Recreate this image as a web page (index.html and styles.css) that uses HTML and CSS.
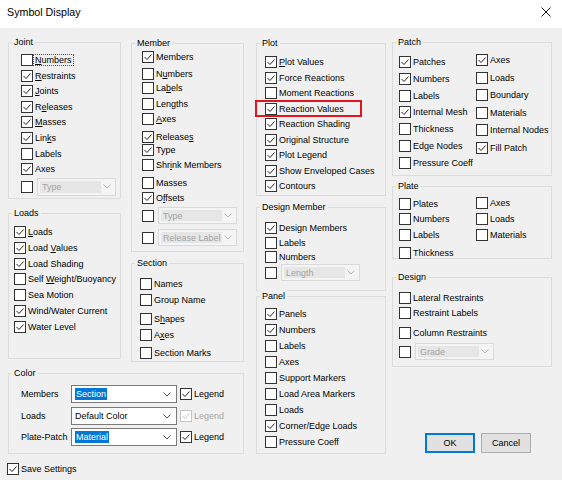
FILE: index.html
```html
<!DOCTYPE html>
<html>
<head>
<meta charset="utf-8">
<title>Symbol Display</title>
<link rel="stylesheet" href="styles.css">
</head>
<body>
<div class="dialog">
  <div class="titlebar">
    <span class="title">Symbol Display</span>
    <svg class="close" viewBox="0 0 10 10"><path d="M0.5 0.5 L9.5 9.5 M9.5 0.5 L0.5 9.5"/></svg>
  </div>
  <div class="main">
    <div class="left">
      <div class="cols-ab">
        <div class="col col-a">
          <div class="group joint">
            <span class="legend">Joint</span>
            <div class="row"><span class="cb"></span><span class="focus"><u>N</u>umbers</span></div>
            <div class="row"><span class="cb on"><svg viewBox="0 0 10 10"><polyline points="1.5,5 4,7.5 8.5,2.5"/></svg></span><span><u>R</u>estraints</span></div>
            <div class="row"><span class="cb on"><svg viewBox="0 0 10 10"><polyline points="1.5,5 4,7.5 8.5,2.5"/></svg></span><span><u>J</u>oints</span></div>
            <div class="row"><span class="cb on"><svg viewBox="0 0 10 10"><polyline points="1.5,5 4,7.5 8.5,2.5"/></svg></span><span>R<u>e</u>leases</span></div>
            <div class="row"><span class="cb on"><svg viewBox="0 0 10 10"><polyline points="1.5,5 4,7.5 8.5,2.5"/></svg></span><span><u>M</u>asses</span></div>
            <div class="row"><span class="cb on"><svg viewBox="0 0 10 10"><polyline points="1.5,5 4,7.5 8.5,2.5"/></svg></span><span>Lin<u>k</u>s</span></div>
            <div class="row"><span class="cb"></span><span>Labels</span></div>
            <div class="row"><span class="cb on"><svg viewBox="0 0 10 10"><polyline points="1.5,5 4,7.5 8.5,2.5"/></svg></span><span>Axes</span></div>
            <div class="row crow crow18 mt1"><span class="cb"></span><div class="combo dis"><span class="ctext">Type</span><svg class="chev" viewBox="0 0 8 5"><polyline points="0.5,0.5 4,4 7.5,0.5"/></svg></div></div>
          </div>
          <div class="group loads">
            <span class="legend">Loads</span>
            <div class="row"><span class="cb on"><svg viewBox="0 0 10 10"><polyline points="1.5,5 4,7.5 8.5,2.5"/></svg></span><span><u>L</u>oads</span></div>
            <div class="row"><span class="cb on"><svg viewBox="0 0 10 10"><polyline points="1.5,5 4,7.5 8.5,2.5"/></svg></span><span>Load <u>V</u>alues</span></div>
            <div class="row"><span class="cb on"><svg viewBox="0 0 10 10"><polyline points="1.5,5 4,7.5 8.5,2.5"/></svg></span><span>Load Shading</span></div>
            <div class="row"><span class="cb"></span><span>Self <u>W</u>eight/Buoyancy</span></div>
            <div class="row"><span class="cb"></span><span>Sea Motion</span></div>
            <div class="row"><span class="cb on"><svg viewBox="0 0 10 10"><polyline points="1.5,5 4,7.5 8.5,2.5"/></svg></span><span>Wind/Water Current</span></div>
            <div class="row"><span class="cb on"><svg viewBox="0 0 10 10"><polyline points="1.5,5 4,7.5 8.5,2.5"/></svg></span><span>Water Level</span></div>
          </div>
        </div>
        <div class="col col-b">
          <div class="group member">
            <span class="legend">Member</span>
            <div class="row"><span class="cb on"><svg viewBox="0 0 10 10"><polyline points="1.5,5 4,7.5 8.5,2.5"/></svg></span><span>Members</span></div>
            <div class="row mt1"><span class="cb"></span><span>N<u>u</u>mbers</span></div>
            <div class="row mt-2"><span class="cb"></span><span>La<u>b</u>els</span></div>
            <div class="row"><span class="cb"></span><span>Len<u>g</u>ths</span></div>
            <div class="row mt-1"><span class="cb"></span><span><u>A</u>xes</span></div>
            <div class="row mt2"><span class="cb on"><svg viewBox="0 0 10 10"><polyline points="1.5,5 4,7.5 8.5,2.5"/></svg></span><span>Release<u>s</u></span></div>
            <div class="row mt-3"><span class="cb on"><svg viewBox="0 0 10 10"><polyline points="1.5,5 4,7.5 8.5,2.5"/></svg></span><span>Type</span></div>
            <div class="row mt-1"><span class="cb"></span><span>Shr<u>i</u>nk Members</span></div>
            <div class="row mt2"><span class="cb"></span><span>Masses</span></div>
            <div class="row mt-1"><span class="cb on"><svg viewBox="0 0 10 10"><polyline points="1.5,5 4,7.5 8.5,2.5"/></svg></span><span>O<u>f</u>fsets</span></div>
            <div class="row crow mt1"><span class="cb"></span><div class="combo dis"><span class="ctext">Type</span><svg class="chev" viewBox="0 0 8 5"><polyline points="0.5,0.5 4,4 7.5,0.5"/></svg></div></div>
            <div class="row crow mt5"><span class="cb"></span><div class="combo dis"><span class="ctext">Release Label</span><svg class="chev" viewBox="0 0 8 5"><polyline points="0.5,0.5 4,4 7.5,0.5"/></svg></div></div>
          </div>
          <div class="group section">
            <span class="legend">Section</span>
            <div class="row"><span class="cb"></span><span>Names</span></div>
            <div class="row"><span class="cb"></span><span>Group Name</span></div>
            <div class="row mt3"><span class="cb"></span><span>S<u>h</u>apes</span></div>
            <div class="row"><span class="cb"></span><span>A<u>x</u>es</span></div>
            <div class="row mt2"><span class="cb"></span><span>Section Marks</span></div>
          </div>
        </div>
      </div>
      <div class="group color">
        <span class="legend">Color</span>
        <div class="crow-color">
          <span class="clabel">Members</span>
          <div class="combo en"><span class="ctext"><span class="sel">Section</span></span><svg class="chev" viewBox="0 0 8 5"><polyline points="0.5,0.5 4,4 7.5,0.5"/></svg></div>
          <span class="cb on"><svg viewBox="0 0 10 10"><polyline points="1.5,5 4,7.5 8.5,2.5"/></svg></span><span>Legend</span>
        </div>
        <div class="crow-color mt4">
          <span class="clabel">Loads</span>
          <div class="combo en"><span class="ctext">Default Color</span><svg class="chev" viewBox="0 0 8 5"><polyline points="0.5,0.5 4,4 7.5,0.5"/></svg></div>
          <span class="cb on disabled"><svg viewBox="0 0 10 10"><polyline points="1.5,5 4,7.5 8.5,2.5"/></svg></span><span class="gray">Legend</span>
        </div>
        <div class="crow-color mt3">
          <span class="clabel">Plate-Patch</span>
          <div class="combo en"><span class="ctext"><span class="sel">Material</span></span><svg class="chev" viewBox="0 0 8 5"><polyline points="0.5,0.5 4,4 7.5,0.5"/></svg></div>
          <span class="cb on"><svg viewBox="0 0 10 10"><polyline points="1.5,5 4,7.5 8.5,2.5"/></svg></span><span>Legend</span>
        </div>
      </div>
    </div>
    <div class="col col-c">
      <div class="group plot">
        <span class="legend">Plot</span>
        <div class="row"><span class="cb on"><svg viewBox="0 0 10 10"><polyline points="1.5,5 4,7.5 8.5,2.5"/></svg></span><span><u>P</u>lot Values</span></div>
        <div class="row"><span class="cb on"><svg viewBox="0 0 10 10"><polyline points="1.5,5 4,7.5 8.5,2.5"/></svg></span><span>Force Reactions</span></div>
        <div class="row"><span class="cb"></span><span>Moment Reactions</span></div>
        <div class="row marked"><span class="cb on"><svg viewBox="0 0 10 10"><polyline points="1.5,5 4,7.5 8.5,2.5"/></svg></span><span>Reaction Values</span><span class="mark"></span></div>
        <div class="row"><span class="cb on"><svg viewBox="0 0 10 10"><polyline points="1.5,5 4,7.5 8.5,2.5"/></svg></span><span>Reaction Shading</span></div>
        <div class="row"><span class="cb on"><svg viewBox="0 0 10 10"><polyline points="1.5,5 4,7.5 8.5,2.5"/></svg></span><span>Original Structure</span></div>
        <div class="row"><span class="cb on"><svg viewBox="0 0 10 10"><polyline points="1.5,5 4,7.5 8.5,2.5"/></svg></span><span>Plot Legend</span></div>
        <div class="row"><span class="cb on"><svg viewBox="0 0 10 10"><polyline points="1.5,5 4,7.5 8.5,2.5"/></svg></span><span>Show Enveloped Cases</span></div>
        <div class="row"><span class="cb on"><svg viewBox="0 0 10 10"><polyline points="1.5,5 4,7.5 8.5,2.5"/></svg></span><span>Contours</span></div>
      </div>
      <div class="group dmember">
        <span class="legend">Design Member</span>
        <div class="row"><span class="cb on"><svg viewBox="0 0 10 10"><polyline points="1.5,5 4,7.5 8.5,2.5"/></svg></span><span>Design Members</span></div>
        <div class="row"><span class="cb"></span><span>Labels</span></div>
        <div class="row"><span class="cb"></span><span>Numbers</span></div>
        <div class="row crow"><span class="cb"></span><div class="combo dis"><span class="ctext">Length</span><svg class="chev" viewBox="0 0 8 5"><polyline points="0.5,0.5 4,4 7.5,0.5"/></svg></div></div>
      </div>
      <div class="group panel">
        <span class="legend">Panel</span>
        <div class="row"><span class="cb on"><svg viewBox="0 0 10 10"><polyline points="1.5,5 4,7.5 8.5,2.5"/></svg></span><span>Panels</span></div>
        <div class="row"><span class="cb on"><svg viewBox="0 0 10 10"><polyline points="1.5,5 4,7.5 8.5,2.5"/></svg></span><span>Numbers</span></div>
        <div class="row"><span class="cb"></span><span>Labels</span></div>
        <div class="row"><span class="cb"></span><span>Axes</span></div>
        <div class="row"><span class="cb"></span><span>Support Markers</span></div>
        <div class="row"><span class="cb"></span><span>Load Area Markers</span></div>
        <div class="row"><span class="cb"></span><span>Loads</span></div>
        <div class="row"><span class="cb on"><svg viewBox="0 0 10 10"><polyline points="1.5,5 4,7.5 8.5,2.5"/></svg></span><span>Corner/Edge Loads</span></div>
        <div class="row"><span class="cb"></span><span>Pressure Coeff</span></div>
      </div>
    </div>
    <div class="col col-d">
      <div class="group patch">
        <span class="legend">Patch</span>
        <div class="pcol pcol1">
          <div class="row"><span class="cb on"><svg viewBox="0 0 10 10"><polyline points="1.5,5 4,7.5 8.5,2.5"/></svg></span><span>Patches</span></div>
          <div class="row"><span class="cb on"><svg viewBox="0 0 10 10"><polyline points="1.5,5 4,7.5 8.5,2.5"/></svg></span><span>Numbers</span></div>
          <div class="row"><span class="cb"></span><span>Labels</span></div>
          <div class="row"><span class="cb on"><svg viewBox="0 0 10 10"><polyline points="1.5,5 4,7.5 8.5,2.5"/></svg></span><span>Internal Mesh</span></div>
          <div class="row"><span class="cb"></span><span>Thickness</span></div>
          <div class="row"><span class="cb"></span><span>Edge Nodes</span></div>
          <div class="row"><span class="cb"></span><span>Pressure Coeff</span></div>
        </div>
        <div class="pcol pcol2">
          <div class="row"><span class="cb on"><svg viewBox="0 0 10 10"><polyline points="1.5,5 4,7.5 8.5,2.5"/></svg></span><span>Axes</span></div>
          <div class="row"><span class="cb"></span><span>Loads</span></div>
          <div class="row"><span class="cb"></span><span>Boundary</span></div>
          <div class="row"><span class="cb"></span><span>Materials</span></div>
          <div class="row"><span class="cb"></span><span>Internal Nodes</span></div>
          <div class="row"><span class="cb on"><svg viewBox="0 0 10 10"><polyline points="1.5,5 4,7.5 8.5,2.5"/></svg></span><span>Fill Patch</span></div>
        </div>
      </div>
      <div class="group plate">
        <span class="legend">Plate</span>
        <div class="pcol pcol1">
          <div class="row"><span class="cb"></span><span>Plates</span></div>
          <div class="row mt-1"><span class="cb"></span><span>Numbers</span></div>
          <div class="row"><span class="cb"></span><span>Labels</span></div>
          <div class="row mt2"><span class="cb"></span><span>Thickness</span></div>
        </div>
        <div class="pcol pcol2">
          <div class="row"><span class="cb"></span><span>Axes</span></div>
          <div class="row"><span class="cb"></span><span>Loads</span></div>
          <div class="row"><span class="cb"></span><span>Materials</span></div>
        </div>
      </div>
      <div class="group design">
        <span class="legend">Design</span>
        <div class="row"><span class="cb"></span><span>Lateral Restraints</span></div>
        <div class="row mt-1"><span class="cb"></span><span>Restraint Labels</span></div>
        <div class="row mt4"><span class="cb"></span><span>Column Restraints</span></div>
        <div class="row crow mt2"><span class="cb"></span><div class="combo dis"><span class="ctext">Grade</span><svg class="chev" viewBox="0 0 8 5"><polyline points="0.5,0.5 4,4 7.5,0.5"/></svg></div></div>
      </div>
      <div class="buttons">
        <button class="btn default">OK</button>
        <button class="btn">Cancel</button>
      </div>
    </div>
  </div>
  <div class="row save"><span class="cb on"><svg viewBox="0 0 10 10"><polyline points="1.5,5 4,7.5 8.5,2.5"/></svg></span><span>Save Settings</span></div>
</div>
</body>
</html>
```

FILE: styles.css
```css
* { box-sizing: border-box; }
html, body { margin: 0; padding: 0; }
body {
  width: 562px;
  height: 480px;
  background: #f0f0f0;
  font-family: "Liberation Sans", Arial, sans-serif;
  font-size: 9px;
  color: #000;
  overflow: hidden;
}
u { text-decoration-thickness: 1px; text-underline-offset: 1px; }

.titlebar {
  height: 28px;
  background: #fff;
  display: flex;
  align-items: flex-start;
  justify-content: space-between;
  padding: 5px 11px 0 7px;
}
.title { font-size: 10.7px; line-height: 14px; }
.close { width: 10px; height: 10px; margin-top: 2px; }
.close path { stroke: #111; stroke-width: 1; fill: none; }

.main { display: flex; align-items: flex-start; }
.left { margin-left: 8px; width: 236px; display: flex; flex-direction: column; }
.cols-ab { display: flex; gap: 10px; align-items: flex-start; }
.col { display: flex; flex-direction: column; }
.col-a { width: 113px; }
.col-b { width: 113px; }
.col-c { width: 130px; margin-left: 12px; }
.col-d { width: 160px; margin-left: 6px; }

.group {
  position: relative;
  border: 1px solid #dcdcdc;
  display: flex;
  flex-direction: column;
}
.legend {
  position: absolute;
  left: 3px;
  top: -7px;
  padding: 0 2px;
  line-height: 12px;
  background: #f0f0f0;
}

.row {
  display: flex;
  align-items: center;
  height: 16px;
  white-space: nowrap;
  flex: none;
}
.cb {
  width: 12px;
  height: 12px;
  border: 1px solid #333;
  background: #fff;
  flex: none;
  margin-right: 2px;
  display: flex;
  align-items: center;
  justify-content: center;
}
.cb svg { width: 10px; height: 10px; }
.cb polyline { fill: none; stroke: #222; stroke-width: 1; }
.cb.disabled { border-color: #c4c4c4; }
.cb.disabled polyline { stroke: #c4c4c4; }
.gray { color: #a6a6a6; }
.focus { outline: 1px dotted #555; outline-offset: 0; padding: 0 1px; margin-left: -1px; }

.mt-3 { margin-top: -3px; }
.mt-2 { margin-top: -2px; }
.mt-1 { margin-top: -1px; }
.mt1 { margin-top: 1px; }
.mt2 { margin-top: 2px; }
.mt3 { margin-top: 3px; }
.mt4 { margin-top: 4px; }
.mt5 { margin-top: 5px; }

/* combos */
.crow { height: 17px; }
.crow18 { height: 18px; }
.combo {
  height: 17px;
  border: 1px solid #7a7a7a;
  display: flex;
  align-items: center;
  flex: none;
}
.crow18 .combo { height: 18px; }
.combo.dis {
  width: 79px;
  margin-left: 2px;
  border-color: #dadada;
  background: #f4f4f4;
  color: #a3a3a3;
}
.combo.dis .ctext {
  flex: 1;
  align-self: stretch;
  margin: 2px 0 2px 2px;
  background: #e6e6e6;
  padding-left: 2px;
  display: flex;
  align-items: center;
  overflow: hidden;
  white-space: nowrap;
}
.chev { width: 8px; height: 5px; margin: 0 5px 0 4px; flex: none; }
.combo.dis .chev { margin: 0 4px 0 2px; }
.chev polyline { fill: none; stroke: #555; stroke-width: 1; }
.combo.dis .chev polyline { stroke: #b5b5b5; }
.combo.en {
  width: 106px;
  height: 18px;
  background: #fff;
  margin-right: 3px;
}
.combo.en .ctext { flex: 1; padding-left: 3px; display: flex; align-items: center; }
.combo.en .chev { margin-right: 5px; }
.sel { background: #0078d7; color: #fff; padding: 1px 1px; }

/* individual groups */
.joint { height: 157px; margin-top: 14px; padding: 9.2px 0 0 12px; }
.joint .row { height: 15.6px; }
.joint .crow18 { height: 18px; }
.loads { height: 146px; margin-top: 14px; padding: 10.1px 0 0 5px; }
.loads .row { height: 15.83px; }

.member { height: 209px; margin-top: 15px; padding: 5px 0 0 10px; }
.section { height: 99px; margin-top: 11px; padding: 12px 0 0 8px; }

.color { height: 81px; margin-top: 11px; padding: 11px 0 0 12px; }
.crow-color { display: flex; align-items: center; height: 18px; white-space: nowrap; }
.clabel { width: 50px; flex: none; }

.plot { height: 153px; margin-top: 15px; padding: 10.25px 0 0 8px; }
.plot .row { height: 15.5px; }
.marked { position: relative; }
.mark {
  position: absolute;
  left: -10px;
  top: -1px;
  width: 107px;
  height: 17px;
  border: 2px solid #e3141e;
}
.dmember { height: 84px; margin-top: 11px; padding: 12.75px 0 0 8px; }
.dmember .row { height: 14.5px; }
.dmember .crow { height: 17px; }
.panel { height: 158px; margin-top: 5px; padding: 9px 0 0 8px; }

.patch { height: 134px; margin-top: 14px; flex-direction: row; padding-left: 6px; }
.pcol { display: flex; flex-direction: column; }
.pcol1 { width: 77px; flex: none; }
.pcol2 { flex: 1; overflow: hidden; }
.patch .pcol1 { padding-top: 10.6px; }
.patch .pcol1 .row { height: 16.83px; }
.patch .pcol2 { padding-top: 8.2px; }
.patch .pcol2 .row { height: 17.6px; }

.plate { height: 73px; margin-top: 10px; flex-direction: row; padding-left: 6px; }
.plate .pcol1 { padding-top: 9px; }
.plate .pcol2 { padding-top: 8px; }

.design { height: 90px; margin-top: 18px; padding: 12px 0 0 6px; }

.buttons {
  display: flex;
  justify-content: flex-end;
  gap: 6px;
  margin-top: 66px;
  margin-right: 21px;
}
.btn {
  width: 50px;
  height: 20px;
  background: #e1e1e1;
  border: 1px solid #adadad;
  font-family: "Liberation Sans", Arial, sans-serif;
  font-size: 9px;
  color: #000;
  padding: 0;
  display: flex;
  align-items: center;
  justify-content: center;
}
.btn.default { border: 2px solid #0078d7; }

.save { margin-top: 7px; padding-left: 7px; }
```
